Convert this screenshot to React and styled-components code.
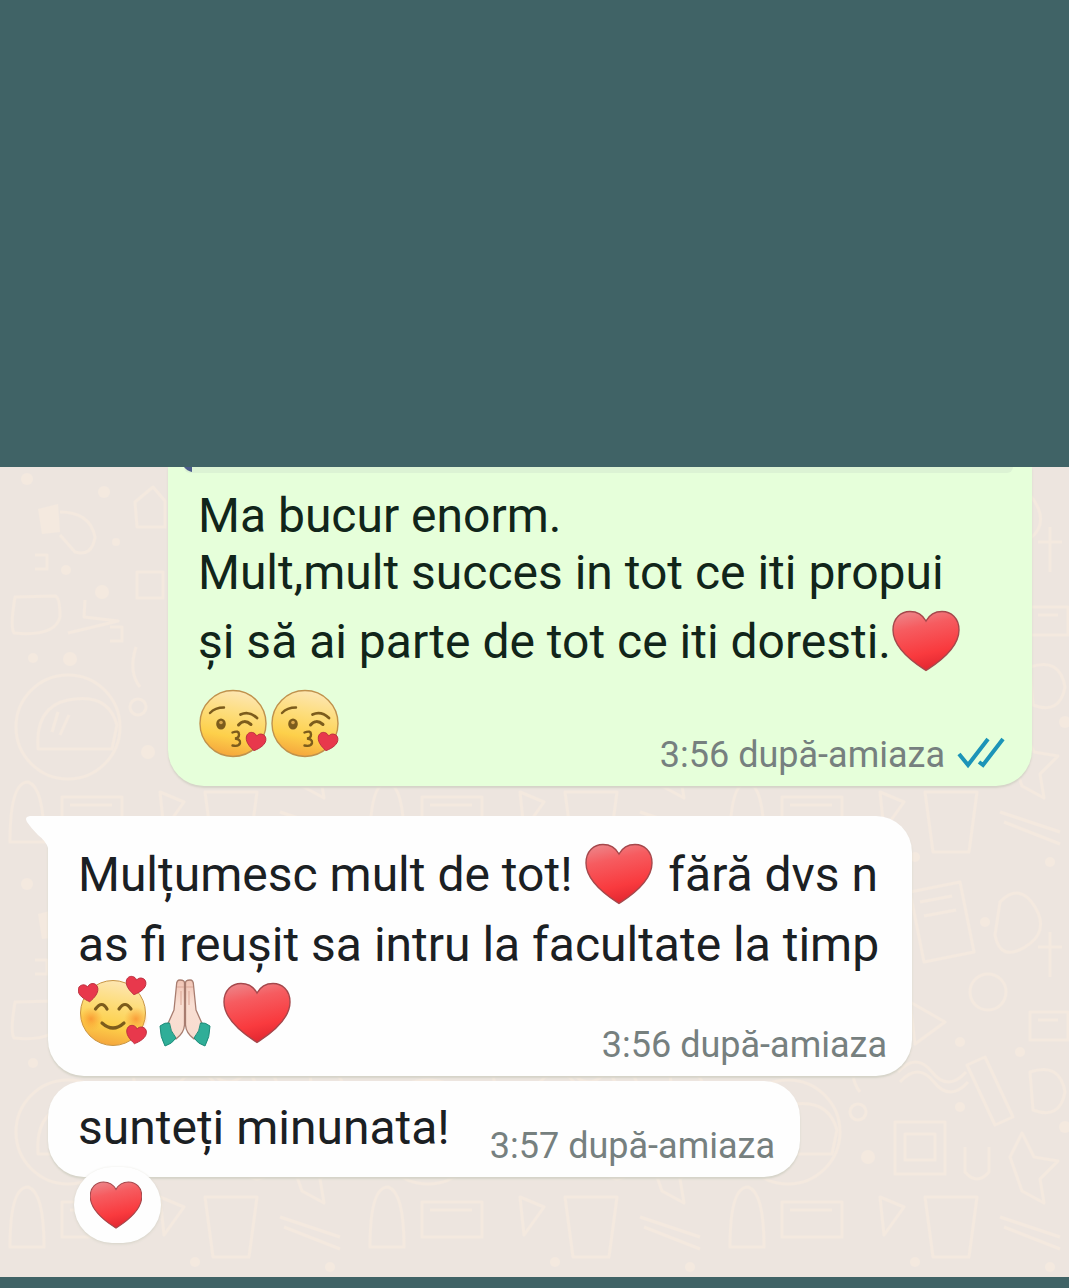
import React from 'react';
import styled, { createGlobalStyle } from 'styled-components';

const GlobalStyle = createGlobalStyle`
    * {
        box-sizing: border-box;
    }
    body {
        margin: 0;
        font-family: Roboto, "Liberation Sans", sans-serif;
        background: #406366;
    }
`;

// Emoji share a 72x82 box, the text baseline is at y = 57.
const heartPath = "M35 69.500 C30 66 2 50 2 29 C2 17 10 10.500 19 10.500 C27 10.500 32 14.500 35 20 C38 14.500 43 10.500 51 10.500 C60 10.500 68 17 68 29 C68 50 40 66 35 69.500 Z";

const Gradients = () => (
    <Hidden aria-hidden="true" width="0" height="0">
        <defs>
            <linearGradient id="heartFill" x1="0.35" y1="0" x2="0.6" y2="1">
                <stop offset="0" stopColor="#ee8084" />
                <stop offset="0.25" stopColor="#f65c60" />
                <stop offset="0.7" stopColor="#f93a3e" />
                <stop offset="1" stopColor="#e0252f" />
            </linearGradient>
            <linearGradient id="faceFill" x1="0.6" y1="0" x2="0.4" y2="1">
                <stop offset="0" stopColor="#fde6b4" />
                <stop offset="0.35" stopColor="#fddd7c" />
                <stop offset="0.7" stopColor="#fdd04a" />
                <stop offset="1" stopColor="#f5a53c" />
            </linearGradient>
            <linearGradient id="handFill" x1="0" y1="0" x2="0" y2="1">
                <stop offset="0" stopColor="#f0c4b4" />
                <stop offset="0.4" stopColor="#f9dfd3" />
                <stop offset="1" stopColor="#f8dccf" />
            </linearGradient>
            <radialGradient id="blush">
                <stop offset="0" stopColor="#f98f30" stopOpacity="0.8" />
                <stop offset="1" stopColor="#f99f30" stopOpacity="0" />
            </radialGradient>
        </defs>
    </Hidden>
);

const Heart = ({ small }) => (
    <Emoji $small={small} viewBox={small ? "2 8 66 64" : "0 0 72 82"} role="img" aria-label="red heart">
        <path d={heartPath} fill="url(#heartFill)" stroke="#a5484c" strokeWidth="1.400" />
    </Emoji>
);

const MiniHeart = ({ x, y, turn }) => (
    <path
        transform={`translate(${x} ${y}) rotate(${turn}) scale(0.3) translate(-35 -40)`}
        d={heartPath}
        fill="#e8384c"
        stroke="#b8303e"
        strokeWidth="3"
    />
);

const Kiss = () => (
    <Emoji viewBox="0 0 72 82" role="img" aria-label="face blowing a kiss">
        <circle cx="35" cy="40.500" r="33" fill="url(#faceFill)" stroke="#c0924c" strokeWidth="1.400" />
        <g fill="none" stroke="#7c5c1c" strokeLinecap="round">
            <path d="M12 30 Q17 24.500 26 24.500" strokeWidth="2.400" />
            <path d="M42.500 31.500 Q51 27.500 59 35" strokeWidth="2.800" />
            <path d="M40.500 42 Q46 35.500 53 41.500" strokeWidth="3" />
            <path d="M34.500 49.500 Q41 47 41 51.500 Q41 55 37 55.500 Q42.500 56 42 60 Q41 64 34.500 62.500" strokeWidth="2.400" />
        </g>
        <ellipse cx="23" cy="41" rx="4.800" ry="5.500" fill="#7c5c1c" />
        <circle cx="23" cy="39.500" r="1.800" fill="#d9a74c" />
        <MiniHeart x={57.500} y={59} turn={10} />
    </Emoji>
);

const Love = () => (
    <Emoji viewBox="0 0 72 82" role="img" aria-label="smiling face with hearts">
        <circle cx="35" cy="40" r="32.500" fill="url(#faceFill)" stroke="#c89544" strokeWidth="1" />
        <circle cx="13" cy="46" r="12" fill="url(#blush)" />
        <circle cx="58" cy="46" r="12" fill="url(#blush)" />
        <g fill="none" stroke="#7c5c1c" strokeLinecap="round">
            <path d="M17.500 36 Q24 27 29 36" strokeWidth="3.200" />
            <path d="M41 36 Q47 27 53 36" strokeWidth="3.200" />
            <path d="M24 50 Q35 60 46 50" strokeWidth="3.200" />
        </g>
        <MiniHeart x={10.500} y={20} turn={-8} />
        <MiniHeart x={57.500} y={13} turn={10} />
        <MiniHeart x={58} y={62} turn={10} />
    </Emoji>
);

const Pray = () => (
    <Emoji viewBox="0 0 72 82" role="img" aria-label="folded hands">
        <g fill="url(#handFill)" stroke="#a87d70" strokeWidth="1.300" strokeLinejoin="round">
            <path d="M34.500 10 Q34.500 7 30 7 Q26.500 7 26.500 12 L24 37 L16 55 L26 66 Q34 60 34.500 52 Z" />
            <path d="M35.500 10 Q35.500 7 40 7 Q43.500 7 43.500 12 L46 37 L54 55 L44 66 Q36 60 35.500 52 Z" />
        </g>
        <path d="M27 14 h7 M36 14 h7 M31 18 V32 M39 18 V32" stroke="#dba797" strokeWidth="1" fill="none" />
        <g fill="#2fae98" stroke="#1f8d7b" strokeWidth="1" strokeLinejoin="round">
            <path d="M10 53 Q15 49 19.500 50 Q20 58 26 65 Q22 71 15 73 Q10 64 10 53 Z" />
            <path d="M60 53 Q55 49 50.500 50 Q50 58 44 65 Q48 71 55 73 Q60 64 60 53 Z" />
        </g>
    </Emoji>
);

const Ticks = () => (
    <TickIcon viewBox="0 0 48 38" role="img" aria-label="read">
        <path d="M2 18 L11 29 L31 3 M22 26 L26 29 L46 3" />
    </TickIcon>
);

// One tile of faint wallpaper drawings.
const Wallpaper = () => (
    <Backdrop aria-hidden="true">
        <defs>
            <pattern id="doodles" width="360" height="405" patternUnits="userSpaceOnUse">
                <g fill="none" stroke="#f4e9df" strokeWidth="3" strokeLinejoin="round">
                    <path d="M15 130 Q10 160 14 166 Q55 170 60 150 Q60 130 55 129 Z" />
                    <path d="M60 45 Q90 45 95 70 Q92 90 75 85 L60 68" />
                    <path d="M35 88 h12 v14 h-12 M85 133 L84 150 L118 154 L68 166 M110 160 h12 v14 h-12" />
                    <circle cx="68" cy="260" r="52" />
                    <path d="M38 282 Q35 240 68 233 Q108 225 117 258 L112 282 Z M52 265 l6 -20 M60 268 l9 -20" />
                    <path d="M136 180 Q128 205 140 220 M130 240 a8 8 0 1 0 16 0 a8 8 0 1 0 -16 0" />
                    <path d="M135 35 l18 -15 l12 14 v26 h-28 z M137 105 h26 v26 h-26 z" />
                    <path d="M10 375 Q10 315 28 315 Q44 320 44 375 Z M62 330 h60 v35 h-60 z M70 338 h42" />
                    <path d="M190 20 l50 -10 l14 70 l-50 10 z M200 30 l32 -6 M204 44 l32 -6" />
                    <path d="M280 30 q20 -20 35 5 t-10 40 t-30 -12 z M330 60 v45 m-12 -30 h24" />
                    <path d="M190 130 l35 20 l-30 22 z M250 120 a18 18 0 1 0 36 0 a18 18 0 1 0 -36 0" />
                    <path d="M310 140 h38 v28 h-38 z M318 148 h20 M178 200 q18 -20 34 0 t34 0 M180 210 q18 -20 34 0 t34 0" />
                    <path d="M265 185 l28 60 l-18 8 l-28 -60 z M310 200 q30 -10 35 20 q-5 28 -32 18 z" />
                    <path d="M175 250 h50 v52 h-50 z M185 262 h30 v26 h-30 z M245 275 v25 q12 14 24 0 v-25" />
                    <path d="M290 285 l12 -24 l12 24 l24 4 l-18 18 l4 24 l-22 -12 z" />
                    <path d="M160 325 l24 10 l-20 28 z M205 325 h52 l-8 60 h-36 z M280 345 l60 20 m-56 -10 l56 22" />
                </g>
                <g fill="#f4e9df">
                    <circle cx="27" cy="12" r="6" />
                    <circle cx="104" cy="25" r="6" />
                    <path d="M38 42 l20 -5 l2 28 l-18 2 z" />
                    <circle cx="116" cy="75" r="4" />
                    <circle cx="66" cy="103" r="5" />
                    <circle cx="102" cy="125" r="7" />
                    <circle cx="33" cy="191" r="5" />
                    <circle cx="70" cy="192" r="7" />
                    <circle cx="148" cy="285" r="7" />
                    <circle cx="265" cy="50" r="5" />
                    <circle cx="240" cy="170" r="5" />
                    <circle cx="300" cy="180" r="5" />
                    <circle cx="240" cy="235" r="5" />
                    <circle cx="345" cy="255" r="6" />
                    <circle cx="195" cy="390" r="5" />
                    <circle cx="330" cy="395" r="5" />
                </g>
            </pattern>
        </defs>
        <rect width="100%" height="100%" fill="url(#doodles)" />
    </Backdrop>
);

const Time = ({ children, read }) => (
    <Meta>
        <time>{children}</time>
        {read && <Ticks />}
    </Meta>
);

const App = () => {
    return (
        <Page>
            <GlobalStyle />
            <Gradients />
            <TopBar />
            <Chat>
                <Wallpaper />
                <Sent>
                    <QuoteEdge>
                        <svg width="8" height="5" viewBox="0 0 8 5" aria-hidden="true">
                            <path d="M0 0 H8 V5 Q3 4 0 0 Z" fill="#4b5b8c" />
                        </svg>
                    </QuoteEdge>
                    <Line>Ma bucur enorm.</Line>
                    <Line>Mult,mult succes in tot ce iti propui</Line>
                    <Line>și să ai parte de tot ce iti doresti.<Heart /></Line>
                    <LastRow>
                        <Line><Kiss /><Kiss /></Line>
                        <Time read>3:56 după-amiaza</Time>
                    </LastRow>
                </Sent>
                <Received>
                    <Tail viewBox="0 0 24 32" aria-hidden="true">
                        <path d="M24 0 H4 Q-2 1 1 6 Q5 12 12 19 Q20 25 22 32 H24 Z" fill="#fefefe" />
                    </Tail>
                    <Line>Mulțumesc mult de tot! <Heart /> fără dvs n</Line>
                    <Line>as fi reușit sa intru la facultate la timp</Line>
                    <LastRow>
                        <Line><Love /><Pray /><Heart /></Line>
                        <Time>3:56 după-amiaza</Time>
                    </LastRow>
                </Received>
                <Received $short>
                    <LastRow>
                        <Line>sunteți minunata!</Line>
                        <Time>3:57 după-amiaza</Time>
                    </LastRow>
                    <Reaction type="button" aria-label="Reactions">
                        <Heart small />
                    </Reaction>
                </Received>
            </Chat>
            <BottomBar />
        </Page>
    );
}

const Page = styled.div`
    display: flex;
    flex-direction: column;
    min-height: 100vh;
`;

const Hidden = styled.svg`
    position: absolute;
`;

const TopBar = styled.header`
    height: 467px;
    background: #406366;
`;

const BottomBar = styled.footer`
    height: 11px;
    background: #406366;
`;

const Chat = styled.main`
    position: relative;
    flex: 1;
    display: flex;
    flex-direction: column;
    align-items: flex-start;
    gap: 5px;
    padding: 0 37px 98px 48px;
    overflow: hidden;
    background: #ede5df;
`;

const Backdrop = styled.svg`
    position: absolute;
    inset: 0;
    width: 100%;
    height: 100%;
`;

const Bubble = styled.section`
    position: relative;
    width: ${props => props.$short ? "752px" : "864px"};
    max-width: 100%;
    padding: 18px 25px 21px 30px;
    border-radius: 36px;
    color: #1b2023;
    background: #fefefe;
    box-shadow: 0 2px 2px #d5d3c8;
`;

const Sent = styled(Bubble)`
    align-self: flex-end;
    margin-bottom: 25px;
    padding-top: 0;
    border-radius: 0 0 36px 36px;
    color: #11251a;
    background: #e6ffda;
`;

const Received = styled(Bubble)`
    border-top-left-radius: ${props => props.$short ? "36px" : "0"};
`;

const QuoteEdge = styled.div`
    height: 6px;
    margin: 0 -6px 14px -14px;
    border-radius: 0 0 6px 6px;
    background: #dcf3d4;

    svg {
        display: block;
    }
`;

const Line = styled.p`
    margin: 0;
    font-size: 48px;
    line-height: 57px;
    white-space: nowrap;
`;

const LastRow = styled.div`
    display: flex;
    justify-content: space-between;
    align-items: flex-end;
`;

const Meta = styled.div`
    display: flex;
    align-items: center;
    gap: 12px;
    margin-bottom: -11px;
    font-size: 36px;
    line-height: 42px;
    white-space: nowrap;
    color: #76807f;
`;

const TickIcon = styled.svg`
    width: 48px;
    height: 38px;
    margin-right: 2px;
    fill: none;
    stroke: #1c94b8;
    stroke-width: 4;
`;

const Emoji = styled.svg`
    display: inline-block;
    width: ${props => props.$small ? "52px" : "72px"};
    height: ${props => props.$small ? "50px" : "82px"};
    vertical-align: ${props => props.$small ? "middle" : "-25px"};
`;

const Tail = styled.svg`
    position: absolute;
    top: 0;
    left: -22px;
    width: 24px;
    height: 32px;
`;

const Reaction = styled.button`
    position: absolute;
    left: 26px;
    bottom: -66px;
    display: flex;
    align-items: center;
    justify-content: center;
    width: 87px;
    height: 76px;
    padding: 0 4px 0 0;
    border: 0;
    border-radius: 38px;
    background: #fefefe;
    box-shadow: 0 1px 3px #d5d3c8;
`;

export default App;
